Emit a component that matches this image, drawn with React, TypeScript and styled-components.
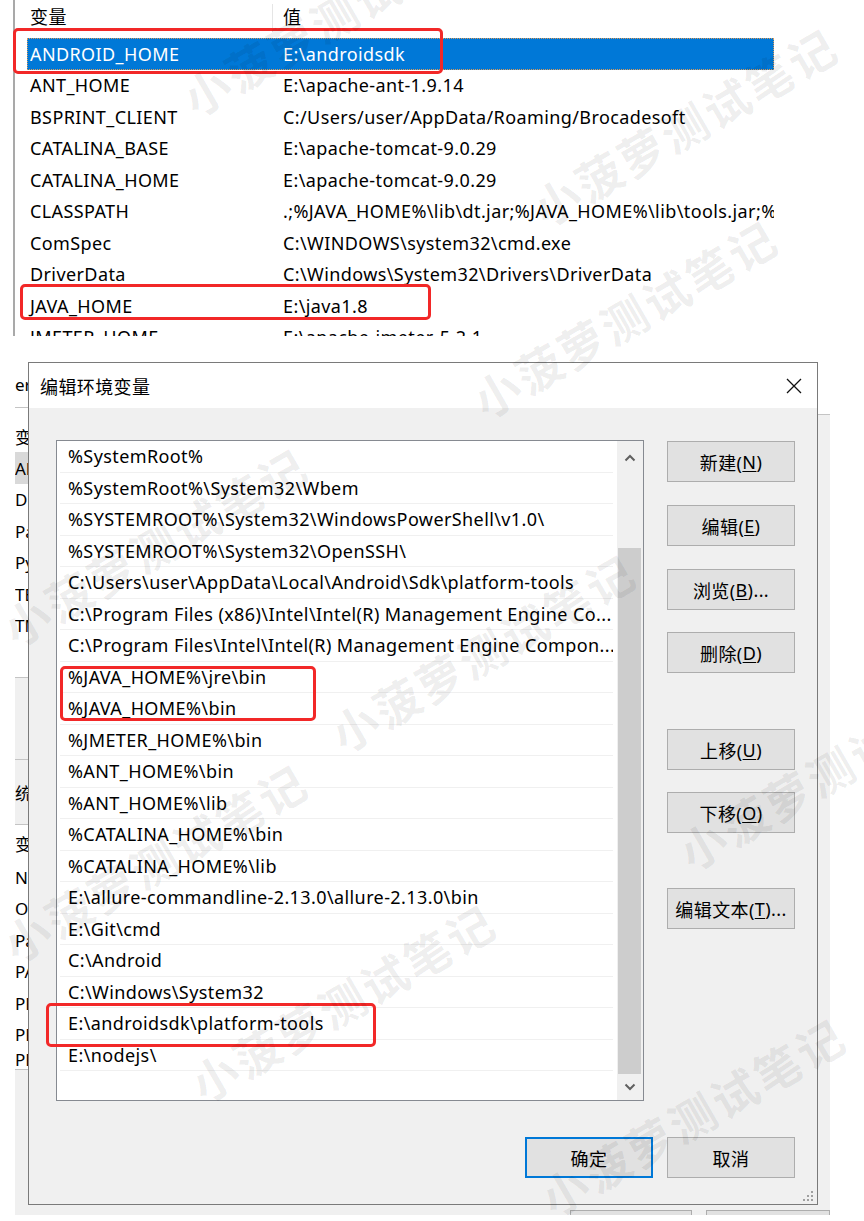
import React from "react"
import styled, { createGlobalStyle, css } from "styled-components"

const UI_FONT = `"Noto Sans", "Noto Sans CJK SC", sans-serif`

const GlobalStyle = createGlobalStyle`
  html, body {
    margin: 0;
    padding: 0;
    background: #fff;
  }

  body {
    font-family: ${UI_FONT};
    color: #000;
  }
`

const Page = styled.div`
  position: relative;
  width: 864px;
  height: 1221px;
  overflow: hidden;
  background: #fff;
  font-family: ${UI_FONT};
  font-size: 18px;
  letter-spacing: 0.4px;
  color: #000;
`

/* ---------- top screenshot: variable list ---------- */

const VarList = styled.section`
  box-sizing: border-box;
  width: 761px;
  height: 336px;
  margin-left: 13px;
  padding-left: 12px;
  border-left: 2px solid #a9a9a9;
  overflow: hidden;
`

const VarHeader = styled.div`
  display: grid;
  grid-template-columns: 245px 1fr;
  height: 38px;
  padding-top: 4px;
  box-sizing: border-box;
`

const HeaderCell = styled.div<{ $divider?: boolean }>`
  height: 28px;
  line-height: 26px;
  padding-left: ${({ $divider }) => ($divider ? "10px" : "3px")};
  border-left: ${({ $divider }) => ($divider ? "1px solid #e5e5e5" : "none")};
`

const VarRow = styled.div<{ $selected?: boolean }>`
  display: grid;
  grid-template-columns: 253px 1fr;
  align-items: center;
  height: 31.5px;
  padding-left: 3px;
  white-space: nowrap;

  ${({ $selected }) =>
    $selected &&
    css`
      background: #0078d7;
      color: #fff;
      outline: 1px dotted #d99a5a;
      outline-offset: -1px;
    `}
`

/* ---------- background window + dialog ---------- */

const Backdrop = styled.div`
  display: flex;
  flex-direction: column;
  width: 815px;
  margin: 26px 0 0 15px;
`

const BackRow = styled.div`
  display: flex;
  height: 843px;
`

const PeekStrip = styled.div<{ $width: number }>`
  display: flex;
  flex-direction: column;
  width: ${({ $width }) => $width}px;
  overflow: hidden;
  background: #fff;
  font-size: 17px;
  letter-spacing: 0;
`

const PeekItem = styled.div<{ $h: number; $line?: boolean; $gray?: boolean; $sel?: boolean }>`
  flex: none;
  box-sizing: border-box;
  height: ${({ $h }) => $h}px;
  display: flex;
  align-items: center;
  white-space: nowrap;
  background: ${({ $gray, $sel }) => ($sel ? "#d9d9d9" : $gray ? "#f0f0f0" : "transparent")};
  border-bottom: ${({ $line }) => ($line ? "1px solid #c4c4c4" : "none")};
`

const PeekFill = styled.div<{ $gray?: boolean }>`
  flex: 1;
  background: ${({ $gray }) => ($gray ? "#f0f0f0" : "#fff")};
`

const BottomPeek = styled.div`
  display: flex;
  height: 10px;
  background: #f0f0f0;
  overflow: hidden;
`

const PeekButton = styled.div<{ $left: number; $width: number }>`
  box-sizing: border-box;
  width: ${({ $width }) => $width}px;
  height: 20px;
  margin: 5px 0 0 ${({ $left }) => $left}px;
  border: 1px solid #adadad;
  background: #e1e1e1;
`

const Dialog = styled.div`
  box-sizing: border-box;
  display: flex;
  flex-direction: column;
  width: 790px;
  height: 843px;
  border: 1px solid #7a7a7a;
  background: #f0f0f0;
`

const TitleBar = styled.div`
  display: flex;
  align-items: center;
  justify-content: space-between;
  height: 45px;
  padding: 0 15px 0 11px;
  background: #fff;
`

const CloseButton = styled.div`
  display: flex;
  width: 16px;
  height: 16px;
`

const DialogBody = styled.div`
  flex: 1;
  display: flex;
  flex-direction: column;
  padding: 32px 22px 0 27px;
`

const MainRow = styled.div`
  display: flex;
  gap: 23px;
`

const ListBox = styled.div`
  box-sizing: border-box;
  display: flex;
  width: 588px;
  height: 661px;
  border: 1px solid #868a91;
  background: #fff;
`

const PathList = styled.div`
  flex: 1;
  display: flex;
  flex-direction: column;
  min-width: 0;
`

const PathRow = styled.div`
  flex: none;
  box-sizing: border-box;
  display: flex;
  align-items: center;
  height: 31.5px;
  margin: 0 4px 0 3px;
  padding-left: 8px;
  border-bottom: 1px solid #f0f0f0;
  white-space: nowrap;
  overflow: hidden;
`

const ScrollBar = styled.div`
  display: flex;
  flex-direction: column;
  width: 26px;
  background: #f0f0f0;
`

const ScrollArrow = styled.div<{ $h: number }>`
  display: flex;
  align-items: center;
  justify-content: center;
  height: ${({ $h }) => $h}px;
`

const ScrollTrack = styled.div`
  flex: 1;
  display: flex;
  flex-direction: column;
  justify-content: flex-end;
`

const ScrollThumb = styled.div`
  height: 526px;
  margin: 0 2px 0 1px;
  background: #cdcdcd;
`

const ButtonColumn = styled.div`
  display: flex;
  flex-direction: column;
  padding-top: 1px;
`

const WinButton = styled.div<{ $gap?: number; $default?: boolean }>`
  box-sizing: border-box;
  display: flex;
  align-items: center;
  justify-content: center;
  width: 128px;
  height: 41px;
  margin-top: ${({ $gap }) => ($gap ?? 0)}px;
  border: ${({ $default }) => ($default ? "2px solid #0078d7" : "1px solid #adadad")};
  background: #e1e1e1;
  white-space: nowrap;

  & u {
    text-underline-offset: 2px;
  }
`

const Footer = styled.div`
  display: flex;
  justify-content: flex-end;
  gap: 14px;
  margin-top: 36px;
`

const GripRow = styled.div`
  flex: 1;
  display: flex;
  align-items: flex-end;
  justify-content: flex-end;
  margin-right: -18px;
  padding-bottom: 3px;
`

/* ---------- overlays: annotations & watermark ---------- */

const RedMark = styled.div<{ $x: number; $y: number; $w: number; $h: number }>`
  position: absolute;
  left: ${({ $x }) => $x}px;
  top: ${({ $y }) => $y}px;
  width: ${({ $w }) => $w}px;
  height: ${({ $h }) => $h}px;
  box-sizing: border-box;
  border: 3px solid #f22828;
  border-radius: 5px;
  pointer-events: none;
`

const Watermark = styled.div<{ $x: number; $y: number }>`
  position: absolute;
  left: ${({ $x }) => $x}px;
  top: ${({ $y }) => $y - 48}px;
  transform: rotate(-30deg);
  transform-origin: 0 100%;
  font: 700 46px/48px "Noto Sans CJK SC", sans-serif;
  letter-spacing: 3px;
  color: rgba(0, 0, 0, 0.07);
  white-space: nowrap;
  pointer-events: none;
`

const vars: [string, string][] = [
  ["ANDROID_HOME", "E:\\androidsdk"],
  ["ANT_HOME", "E:\\apache-ant-1.9.14"],
  ["BSPRINT_CLIENT", "C:/Users/user/AppData/Roaming/Brocadesoft"],
  ["CATALINA_BASE", "E:\\apache-tomcat-9.0.29"],
  ["CATALINA_HOME", "E:\\apache-tomcat-9.0.29"],
  ["CLASSPATH", ".;%JAVA_HOME%\\lib\\dt.jar;%JAVA_HOME%\\lib\\tools.jar;%"],
  ["ComSpec", "C:\\WINDOWS\\system32\\cmd.exe"],
  ["DriverData", "C:\\Windows\\System32\\Drivers\\DriverData"],
  ["JAVA_HOME", "E:\\java1.8"],
  ["JMETER_HOME", "E:\\apache-jmeter-5.2.1"],
]

const paths = [
  "%SystemRoot%",
  "%SystemRoot%\\System32\\Wbem",
  "%SYSTEMROOT%\\System32\\WindowsPowerShell\\v1.0\\",
  "%SYSTEMROOT%\\System32\\OpenSSH\\",
  "C:\\Users\\user\\AppData\\Local\\Android\\Sdk\\platform-tools",
  "C:\\Program Files (x86)\\Intel\\Intel(R) Management Engine Co...",
  "C:\\Program Files\\Intel\\Intel(R) Management Engine Compon...",
  "%JAVA_HOME%\\jre\\bin",
  "%JAVA_HOME%\\bin",
  "%JMETER_HOME%\\bin",
  "%ANT_HOME%\\bin",
  "%ANT_HOME%\\lib",
  "%CATALINA_HOME%\\bin",
  "%CATALINA_HOME%\\lib",
  "E:\\allure-commandline-2.13.0\\allure-2.13.0\\bin",
  "E:\\Git\\cmd",
  "C:\\Android",
  "C:\\Windows\\System32",
  "E:\\androidsdk\\platform-tools",
  "E:\\nodejs\\",
]

// bits of the environment-variables window peeking out left of the dialog
const leftPeek = [
  { text: "er", h: 46, line: true },
  { text: "", h: 13 },
  { text: "变", h: 31 },
  { text: "AN", h: 32, sel: true },
  { text: "Dr", h: 31 },
  { text: "Pa", h: 32 },
  { text: "Py", h: 31 },
  { text: "TE", h: 32 },
  { text: "TM", h: 31 },
  { text: "", h: 37, line: true },
  { text: "", h: 82, gray: true, line: true },
  { text: "统", h: 65, gray: true, line: true },
  { text: "变", h: 36 },
  { text: "N", h: 32 },
  { text: "O", h: 31 },
  { text: "Pa", h: 32 },
  { text: "PA", h: 31 },
  { text: "PR", h: 32 },
  { text: "PR", h: 31 },
  { text: "PR", h: 20, line: true },
]

const watermarks = [
  [198, 122],
  [548, 232],
  [488, 424],
  [18, 652],
  [346, 758],
  [694, 876],
  [18, 968],
  [206, 1108],
  [556, 1222],
]

function ChevronUp() {
  return (
    <svg width="12" height="8" viewBox="0 0 12 8">
      <path d="M1.5 6.5 L6 2 L10.5 6.5" fill="none" stroke="#606060" strokeWidth="2" />
    </svg>
  )
}

function ChevronDown() {
  return (
    <svg width="12" height="8" viewBox="0 0 12 8">
      <path d="M1.5 1.5 L6 6 L10.5 1.5" fill="none" stroke="#606060" strokeWidth="2" />
    </svg>
  )
}

function ResizeGrip() {
  const dots = [
    [9, 1],
    [5, 5],
    [9, 5],
    [1, 9],
    [5, 9],
    [9, 9],
  ]
  return (
    <svg width="11" height="11" viewBox="0 0 11 11">
      {dots.map(([x, y]) => (
        <rect key={`${x}-${y}`} x={x} y={y} width="2" height="2" fill="#a0a0a0" />
      ))}
    </svg>
  )
}

export default function App() {
  return (
    <Page>
      <GlobalStyle />

      <VarList>
        <VarHeader>
          <HeaderCell>变量</HeaderCell>
          <HeaderCell $divider>值</HeaderCell>
        </VarHeader>
        {vars.map(([name, value], i) => (
          <VarRow key={name} $selected={i === 0}>
            <span>{name}</span>
            <span>{value}</span>
          </VarRow>
        ))}
      </VarList>

      <Backdrop>
        <BackRow>
          <PeekStrip $width={13}>
            {leftPeek.map((item, i) => (
              <PeekItem key={i} $h={item.h} $line={item.line} $gray={item.gray} $sel={item.sel}>
                {item.text}
              </PeekItem>
            ))}
            <PeekFill $gray />
          </PeekStrip>

          <Dialog>
            <TitleBar>
              <span>编辑环境变量</span>
              <CloseButton>
                <svg width="16" height="16" viewBox="0 0 16 16">
                  <path d="M1 1 L15 15 M15 1 L1 15" stroke="#111" strokeWidth="1.3" />
                </svg>
              </CloseButton>
            </TitleBar>

            <DialogBody>
              <MainRow>
                <ListBox>
                  <PathList>
                    {paths.map((p) => (
                      <PathRow key={p}>{p}</PathRow>
                    ))}
                  </PathList>
                  <ScrollBar>
                    <ScrollArrow $h={33}>
                      <ChevronUp />
                    </ScrollArrow>
                    <ScrollTrack>
                      <ScrollThumb />
                    </ScrollTrack>
                    <ScrollArrow $h={26}>
                      <ChevronDown />
                    </ScrollArrow>
                  </ScrollBar>
                </ListBox>

                <ButtonColumn>
                  <WinButton>
                    新建(<u>N</u>)
                  </WinButton>
                  <WinButton $gap={23}>
                    编辑(<u>E</u>)
                  </WinButton>
                  <WinButton $gap={23}>
                    浏览(<u>B</u>)...
                  </WinButton>
                  <WinButton $gap={22}>
                    删除(<u>D</u>)
                  </WinButton>
                  <WinButton $gap={56}>
                    上移(<u>U</u>)
                  </WinButton>
                  <WinButton $gap={22}>
                    下移(<u>O</u>)
                  </WinButton>
                  <WinButton $gap={55}>
                    编辑文本(<u>T</u>)...
                  </WinButton>
                </ButtonColumn>
              </MainRow>

              <Footer>
                <WinButton $default>确定</WinButton>
                <WinButton>取消</WinButton>
              </Footer>

              <GripRow>
                <ResizeGrip />
              </GripRow>
            </DialogBody>
          </Dialog>

          <PeekStrip $width={12}>
            <PeekItem $h={53} $line />
            <PeekFill $gray />
          </PeekStrip>
        </BackRow>
        <BottomPeek>
          <PeekButton $left={555} $width={128} />
          <PeekButton $left={14} $width={130} />
        </BottomPeek>
      </Backdrop>

      <RedMark $x={13} $y={28} $w={430} $h={46} />
      <RedMark $x={20} $y={284} $w={411} $h={36} />
      <RedMark $x={60} $y={666} $w={256} $h={55} />
      <RedMark $x={46} $y={1003} $w={330} $h={44} />

      {watermarks.map(([x, y]) => (
        <Watermark key={`${x}-${y}`} $x={x} $y={y}>
          小菠萝测试笔记
        </Watermark>
      ))}
    </Page>
  )
}
